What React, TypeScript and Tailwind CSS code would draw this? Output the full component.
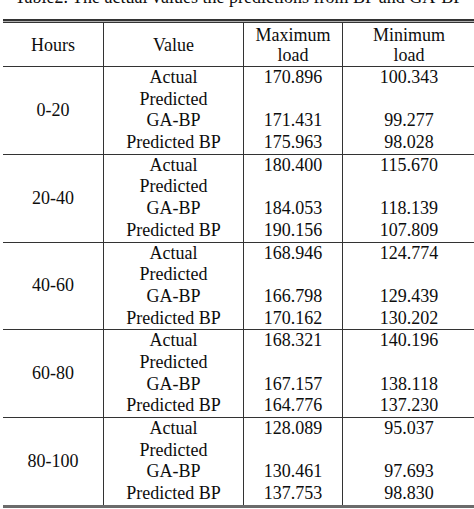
const GROUPS = [
  { hours: '0-20', actual: ['170.896', '100.343'], ga: ['171.431', '99.277'], bp: ['175.963', '98.028'] },
  { hours: '20-40', actual: ['180.400', '115.670'], ga: ['184.053', '118.139'], bp: ['190.156', '107.809'] },
  { hours: '40-60', actual: ['168.946', '124.774'], ga: ['166.798', '129.439'], bp: ['170.162', '130.202'] },
  { hours: '60-80', actual: ['168.321', '140.196'], ga: ['167.157', '138.118'], bp: ['164.776', '137.230'] },
  { hours: '80-100', actual: ['128.089', '95.037'], ga: ['130.461', '97.693'], bp: ['137.753', '98.830'] },
]

function Lines({ items }: { items: string[] }) {
  return (
    <div className="flex flex-col items-center leading-[21.7px]">
      {items.map((s, i) => (
        <div key={i} className="h-[21.7px] whitespace-nowrap">{s || '\u00a0'}</div>
      ))}
    </div>
  )
}

export default function App() {
  return (
    <div
      className="w-[474px] h-[509px] overflow-hidden bg-white text-[18px] text-[#0d0d0d]"
      style={{ fontFamily: '"Liberation Serif", "Times New Roman", serif' }}
    >
      <div className="ml-[3px] w-[472px]">
        {/* Caption (cut off at the top, as in the scan) */}
        <div className="mt-[-13px] h-[20px] leading-[20px] text-center whitespace-nowrap">
          Table2. The actual values the predictions from BP and GA-BP
        </div>

        {/* Top double rule */}
        <div className="mt-[12px] h-[2px] bg-[#333]" />
        <div className="h-[1px] bg-[#b0b0b0]" />
        <div className="h-[1px] bg-[#333]" />

        {/* Header */}
        <div className="flex h-[44px] border-b border-[#333] leading-[20px]">
          <div className="w-[101px] shrink-0 border-r border-[#333] flex items-center justify-center">Hours</div>
          <div className="w-[140px] shrink-0 border-r border-[#333] flex items-center justify-center">Value</div>
          <div className="w-[99px] shrink-0 border-r border-[#333] flex flex-col items-center justify-center">
            <span>Maximum</span>
            <span>load</span>
          </div>
          <div className="flex-1 flex flex-col items-center justify-center">
            <span>Minimum</span>
            <span>load</span>
          </div>
        </div>

        {/* Body */}
        {GROUPS.map((g, i) => (
          <div
            key={g.hours}
            className={
              i === GROUPS.length - 1
                ? 'flex border-b-[3px] border-[#6b6b6b]'
                : 'flex border-b border-[#333]'
            }
          >
            <div className="w-[101px] shrink-0 border-r border-[#333] flex items-center justify-center">{g.hours}</div>
            <div className="w-[140px] shrink-0 border-r border-[#333]">
              <Lines items={['Actual', 'Predicted', 'GA-BP', 'Predicted BP']} />
            </div>
            <div className="w-[99px] shrink-0 border-r border-[#333]">
              <Lines items={[g.actual[0], '', g.ga[0], g.bp[0]]} />
            </div>
            <div className="flex-1">
              <Lines items={[g.actual[1], '', g.ga[1], g.bp[1]]} />
            </div>
          </div>
        ))}
      </div>
    </div>
  )
}
